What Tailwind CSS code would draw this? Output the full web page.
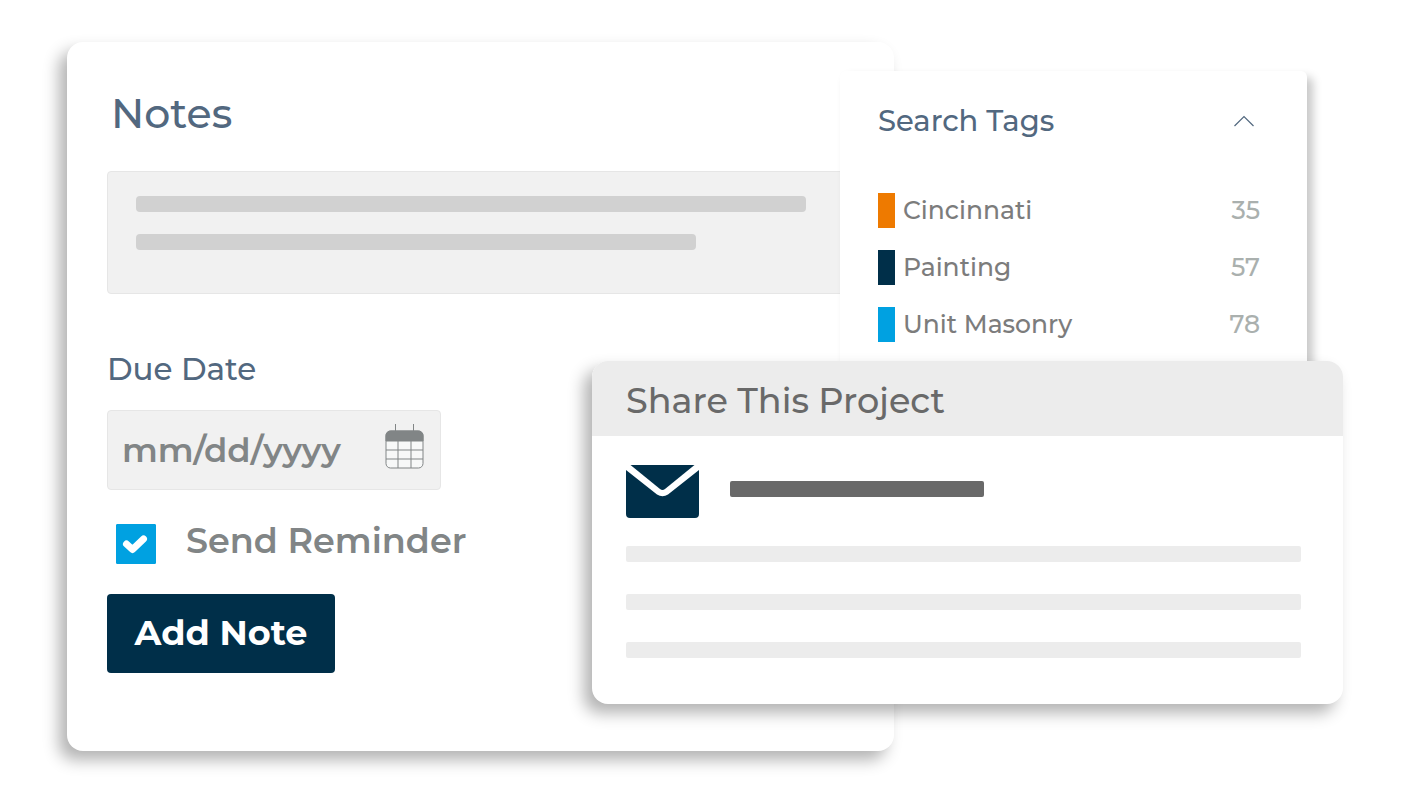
<!DOCTYPE html>
<html lang="en">
<head>
    <meta charset="UTF-8">
    <meta name="viewport" content="width=device-width, initial-scale=1.0">
    <title>Project Notes</title>
    <script src="https://cdn.jsdelivr.net/npm/@tailwindcss/browser@4"></script>
</head>
<body class="bg-white font-['Montserrat','Inter',sans-serif]">
    <main class="relative min-h-screen px-[67px] py-[42px]">

        <!-- Notes -->
        <section class="w-[calc(100%-449px)] rounded-2xl bg-white px-10 pt-[42px] pb-[78px] shadow-[-8px_9px_16px_rgba(0,0,0,0.3)]">
            <h1 class="pl-1 text-[41px] leading-[58px] font-medium text-[#52687f]">Notes</h1>
            <div class="mt-[29px] h-[123px] rounded-sm border border-[#e6e6e6] bg-[#f1f1f1] px-7 pt-6">
                <div class="h-4 w-[670px] max-w-full rounded-sm bg-[#d1d1d1]"></div>
                <div class="mt-[22px] h-4 w-[560px] max-w-full rounded-sm bg-[#d1d1d1]"></div>
            </div>
            <form>
                <label for="dueDate" class="mt-[55px] block text-[31px] leading-10 font-medium text-[#52687f]">Due Date</label>
                <div class="relative mt-[21px] w-[334px]">
                    <input type="text" id="dueDate" placeholder="mm/dd/yyyy" class="h-20 w-full rounded-sm border border-[#e6e6e6] bg-[#f1f1f1] pl-3.5 text-[34px] font-semibold text-[#818586] placeholder:text-[#818586] focus:outline-none">
                    <svg class="pointer-events-none absolute top-3.5 right-[17px] h-[45px] w-[39px]" viewBox="0 0 39 45" fill="none" stroke="#818586">
                        <rect x="1" y="7" width="37" height="37" rx="4.5" fill="#f7f8f8"/>
                        <path d="M1 17v-5.500a4.500 4.500 0 0 1 4.500-4.500h28a4.500 4.500 0 0 1 4.500 4.500V17z" fill="#818586"/>
                        <path d="M10.500 0v8M28.500 0v8M13 17v27M26 17v27M1 26h37M1 35h37"/>
                    </svg>
                </div>
                <div class="mt-[34px] flex h-10 items-center gap-[30px] pl-[9px]">
                    <div class="relative size-10">
                        <input type="checkbox" id="reminder" checked class="peer block size-10 appearance-none rounded-[1px] border border-[#00a1e1] checked:bg-[#00a1e1]">
                        <svg class="pointer-events-none absolute inset-0 hidden size-10 peer-checked:block" viewBox="0 0 40 40" fill="none" stroke="#fff" stroke-width="7" stroke-linecap="round" stroke-linejoin="round">
                            <path d="M10.500 20l6 5.500L27.500 15"/>
                        </svg>
                    </div>
                    <label for="reminder" class="pb-1.5 text-[35px] leading-10 font-semibold whitespace-nowrap text-[#818586]">Send Reminder</label>
                </div>
                <button type="button" class="mt-[30px] block h-[79px] w-[228px] rounded-sm bg-[#002f49] text-[35px] font-bold whitespace-nowrap text-white">Add Note</button>
            </form>
        </section>

        <!-- Search tags -->
        <section class="absolute top-[71px] right-[103px] left-[840px] rounded-md bg-white pt-[30px] pr-[47px] pb-5 pl-[38px] shadow-[6px_6px_10px_rgba(0,0,0,0.22)]">
            <div class="flex h-10 items-center justify-between">
                <h2 class="text-[29px] font-medium text-[#52687f]">Search Tags</h2>
                <button type="button" aria-label="Collapse" class="mr-1.5">
                    <svg class="block h-3 w-5" viewBox="0 0 20 12" fill="none" stroke="#52687f" stroke-width="1.200">
                        <path d="M.5 11L10 1.500L19.500 11"/>
                    </svg>
                </button>
            </div>
            <ul class="mt-[41px] text-[25px] font-medium text-[#7c7c7c]">
                <li class="flex h-[57px] items-center gap-2">
                    <span class="h-[35px] w-[17px] bg-[#ee7a00]"></span>
                    <span>Cincinnati</span>
                    <span class="ml-auto text-[#aab0ae]">35</span>
                </li>
                <li class="flex h-[57px] items-center gap-2">
                    <span class="h-[35px] w-[17px] bg-[#002f49]"></span>
                    <span>Painting</span>
                    <span class="ml-auto text-[#aab0ae]">57</span>
                </li>
                <li class="flex h-[57px] items-center gap-2">
                    <span class="h-[35px] w-[17px] bg-[#00a1e1]"></span>
                    <span>Unit Masonry</span>
                    <span class="ml-auto text-[#aab0ae]">78</span>
                </li>
            </ul>
        </section>

        <!-- Share -->
        <section class="absolute top-[361px] right-[67px] left-[592px] rounded-2xl bg-white shadow-[-8px_9px_16px_rgba(0,0,0,0.3)]">
            <h2 class="rounded-t-2xl bg-[#ececec] px-[34px] pt-1 text-[35px] leading-[71px] font-medium text-[#696969]">Share This Project</h2>
            <div class="pt-[29px] pr-[42px] pb-[46px] pl-[34px]">
                <div class="flex items-center gap-[31px]">
                    <svg class="h-[53px] w-[73px]" viewBox="0 0 73 53" fill="#002f49">
                        <path d="M4.500 0h64L39 24q-2.500 2-5 0z"/>
                        <path d="M0 5l31 24.500q5.500 3.500 11 0L73 5v44a4 4 0 0 1-4 4H4a4 4 0 0 1-4-4z"/>
                    </svg>
                    <div class="mb-1.5 h-4 w-[254px] rounded-xs bg-[#696969]"></div>
                </div>
                <div class="mt-7 flex flex-col gap-8">
                    <div class="h-4 rounded-xs bg-[#ececec]"></div>
                    <div class="h-4 rounded-xs bg-[#ececec]"></div>
                    <div class="h-4 rounded-xs bg-[#ececec]"></div>
                </div>
            </div>
        </section>
    </main>
</body>
</html>
